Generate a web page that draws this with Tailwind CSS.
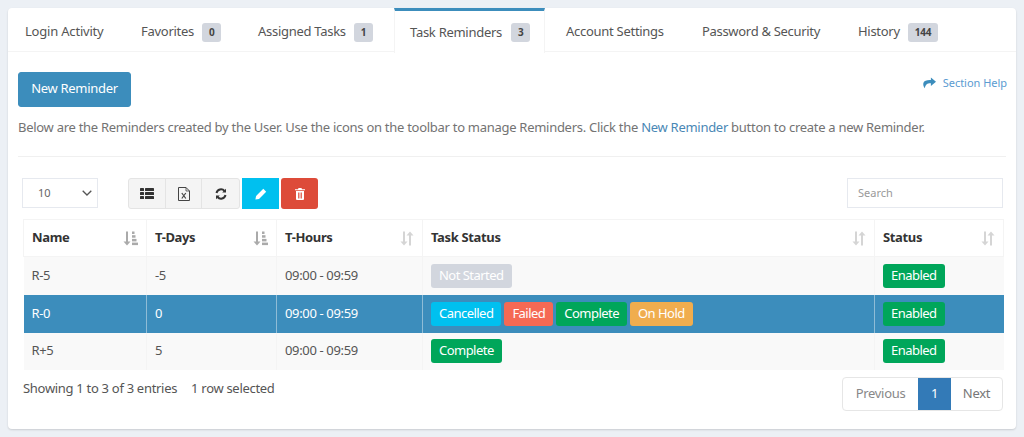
<!DOCTYPE html>
<html>
<head>
<meta charset="utf-8">
<script src="https://cdn.jsdelivr.net/npm/@tailwindcss/browser@4"></script>
</head>
<body class="bg-[#ecf0f5] font-['Noto_Sans',sans-serif] text-[13px] text-[#555] h-[437px] overflow-hidden">
<div class="pt-2 pl-2 w-[1016px]">
<div class="bg-white rounded-[4px] shadow-[0_1px_2px_rgba(0,0,0,0.15)] h-[421px]">
  <div class="flex h-[44px] border-b border-[#f4f4f4] tracking-[-0.28px]">
    <div class="w-[114px] pl-[17px] pt-[5px] flex items-center tracking-[-0.2px]">Login Activity</div>
    <div class="w-[117px] pl-[19px] pt-[5px] flex items-center gap-2">Favorites <span class="bg-[#d2d6de] text-[#444] rounded-[3px] text-[10px] font-bold h-[19px] px-[7px] flex items-center">0</span></div>
    <div class="w-[155px] pl-[19px] pt-[5px] flex items-center gap-2">Assigned Tasks <span class="bg-[#d2d6de] text-[#444] rounded-[3px] text-[10px] font-bold h-[19px] px-[7px] flex items-center">1</span></div>
    <div class="w-[151px] h-[45px] pl-[15px] pt-[1px] flex items-center gap-[9px] border-t-[3px] border-[#3c8dbc] border-x border-x-[#f4f4f4] bg-white">Task Reminders <span class="bg-[#d2d6de] text-[#444] rounded-[3px] text-[10px] font-bold h-[19px] px-[7px] flex items-center">3</span></div>
    <div class="w-[138px] pl-[21px] pt-[5px] flex items-center">Account Settings</div>
    <div class="w-[156px] pl-[19px] pt-[5px] flex items-center tracking-[-0.31px]">Password &amp; Security</div>
    <div class="w-[116px] pl-[19px] pt-[5px] flex items-center gap-2">History <span class="bg-[#d2d6de] text-[#444] rounded-[3px] text-[10px] font-bold h-[19px] px-[7px] flex items-center">144</span></div>
  </div>
  <div class="px-[10px] pt-[20px]">
    <div class="flex justify-between items-start h-[35px]">
      <button class="w-[113px] h-[35px] bg-[#3c8dbc] rounded-[3px] border border-[#3c8dbc] text-white tracking-[-0.3px] pb-[2px]">New Reminder</button>
      <a class="flex items-center gap-[7px] text-[11px] text-[#5b9bd1] mt-[3px] mr-[-1px] tracking-[-0.03px]">
        <svg class="w-[13px] h-[12px]" viewBox="0 0 14 12" fill="#3c8dbc"><path d="M8.5 0 14 4.6 8.5 9.2V6.400C5 6.200 2.800 7.400 2 11.600 0.500 9.800 0 8 0.400 6 1.200 3.200 4.600 2.600 8.500 2.800Z"/></svg>
        Section Help
      </a>
    </div>
    <p class="mt-[11px] leading-[18px] text-[#737373] tracking-[-0.28px] whitespace-nowrap">Below are the Reminders created by the User. Use the icons on the toolbar to manage Reminders. Click the <span class="text-[#4a87b5]">New Reminder</span> button to create a new Reminder.</p>
    <div class="mt-[20px] border-t border-[#f0f0f0]"></div>
    <div class="px-[4px] mt-[21px]">
      <div class="flex items-start h-[31px]">
        <div class="w-[76px] h-[30px] border border-[#e6e9ef] flex items-center justify-between pl-[15px] pr-[5px] text-[11px] text-[#666]">10
          <svg class="w-[10px] h-[6px]" viewBox="0 0 10 6" fill="none" stroke="#555" stroke-width="1.3"><path d="M.7.7 5 5 9.300.7"/></svg>
        </div>
        <div class="ml-[30px] w-[112px] h-[31px] bg-[#f4f4f4] border border-[#e4e4e4] rounded-[3px] flex">
          <div class="w-[37px] border-r border-[#e4e4e4] flex items-center justify-center">
            <svg class="w-[14px] h-[11px]" viewBox="0 0 14 11" fill="#333"><rect width="4" height="3" rx="0.6"/><rect x="5" width="9" height="3" rx="0.6"/><rect y="4" width="4" height="3" rx="0.6"/><rect x="5" y="4" width="9" height="3" rx="0.6"/><rect y="8" width="4" height="3" rx="0.6"/><rect x="5" y="8" width="9" height="3" rx="0.6"/></svg>
          </div>
          <div class="w-[36px] border-r border-[#e4e4e4] flex items-center justify-center">
            <svg class="w-[12px] h-[14px]" viewBox="0 0 12 14" fill="none" stroke="#444" stroke-width="1"><path d="M.5.5H8L11.500 4V13.500H.5Z"/><path d="M8 .5V4H11.500" stroke-width="0.800"/><path d="M3.800 6 7.800 11.500M7.800 6 3.800 11.500" stroke-width="1.200"/></svg>
          </div>
          <div class="flex-1 flex items-center justify-center">
            <svg class="w-[12px] h-[12px]" viewBox="0 0 12 12" fill="none" stroke="#333" stroke-width="2"><path d="M1.500 5A4.600 4.600 0 0 1 9.500 3"/><path d="M10.500 7A4.600 4.600 0 0 1 2.500 9"/><path d="M11 .7V4.500H7.200ZM1 11.300V7.500H4.800Z" fill="#333" stroke="none"/></svg>
          </div>
        </div>
        <div class="ml-[2px] w-[37px] h-[31px] bg-[#00c0ef] flex items-center justify-center">
          <svg class="w-[12px] h-[12px]" viewBox="0 0 12 12" fill="#fff"><path d="M8.300.8 11.200 3.700 4 10.900.4 11.600 1.100 8Z"/></svg>
        </div>
        <div class="ml-[2px] w-[37px] h-[31px] bg-[#dd4b39] rounded-[3px] flex items-center justify-center">
          <svg class="w-[10px] h-[12px]" viewBox="0 0 10 12" fill="#fff"><path d="M3.500 0h3l.5 1.200H10v1H0v-1h3ZM1 3h8v8a1 1 0 0 1-1 1H2a1 1 0 0 1-1-1ZM3 4.500v6h.8v-6ZM4.600 4.500v6h.8v-6ZM6.200 4.500v6H7v-6Z" fill-rule="evenodd"/></svg>
        </div>
        <div class="ml-auto mr-[-1px] w-[156px] h-[30px] border border-[#e6e9ef] flex items-center pl-[10px] text-[11px] text-[#999]">Search</div>
      </div>
    </div>
    <div class="pl-[5px] mt-[10px]">
      <table class="w-[980px] table-fixed border-collapse tracking-[-0.35px]">
        <colgroup><col class="w-[123px]"><col class="w-[130px]"><col class="w-[146px]"><col class="w-[452px]"><col class="w-[129px]"></colgroup>
        <thead>
          <tr class="h-[37px] bg-white font-bold text-[#333] text-left border-y border-[#f4f4f4]">
            <th class="pl-2 border-x border-[#f4f4f4]"><div class="flex justify-between items-center pr-2">Name
              <svg class="w-[15px] h-[15px]" viewBox="0 0 15 14" fill="#aaa"><path d="M3 0h2v10h2.500L4 14 .5 10H3Z"/><rect x="9" y="0" width="2.500" height="2.500"/><rect x="9" y="3.700" width="3.500" height="2.500"/><rect x="9" y="7.400" width="4.500" height="2.500"/><rect x="9" y="11.100" width="6" height="2.500"/></svg></div></th>
            <th class="pl-2 border-x border-[#f4f4f4]"><div class="flex justify-between items-center pr-2">T-Days
              <svg class="w-[15px] h-[15px]" viewBox="0 0 15 14" fill="#aaa"><path d="M3 0h2v10h2.500L4 14 .5 10H3Z"/><rect x="9" y="0" width="2.500" height="2.500"/><rect x="9" y="3.700" width="3.500" height="2.500"/><rect x="9" y="7.400" width="4.500" height="2.500"/><rect x="9" y="11.100" width="6" height="2.500"/></svg></div></th>
            <th class="pl-2 border-x border-[#f4f4f4]"><div class="flex justify-between items-center pr-2">T-Hours
              <svg class="w-[14px] h-[15px]" viewBox="0 0 14 14" fill="#d5d5d5"><path d="M3 0h2v10h2.500L4 14 .5 10H3Z"/><path d="M9 14h2V4h2.500L10 0 6.500 4H9Z"/></svg></div></th>
            <th class="pl-2 border-x border-[#f4f4f4]"><div class="flex justify-between items-center pr-2">Task Status
              <svg class="w-[14px] h-[15px]" viewBox="0 0 14 14" fill="#d5d5d5"><path d="M3 0h2v10h2.500L4 14 .5 10H3Z"/><path d="M9 14h2V4h2.500L10 0 6.500 4H9Z"/></svg></div></th>
            <th class="pl-2 border-x border-[#f4f4f4]"><div class="flex justify-between items-center pr-2">Status
              <svg class="w-[14px] h-[15px]" viewBox="0 0 14 14" fill="#d5d5d5"><path d="M3 0h2v10h2.500L4 14 .5 10H3Z"/><path d="M9 14h2V4h2.500L10 0 6.500 4H9Z"/></svg></div></th>
          </tr>
        </thead>
        <tbody class="[&_span]:tracking-[-0.53px]">
          <tr class="h-[38px] bg-[#f9f9f9] text-[#555]">
            <td class="pl-2">R-5</td><td class="pl-2 border-l border-[#f4f4f4]">-5</td><td class="pl-2 border-l border-[#f4f4f4]">09:00 - 09:59</td>
            <td class="pl-2 border-l border-[#f4f4f4]"><span class="inline-flex items-center h-[24px] px-2 rounded-[3px] bg-[#d2d6de] text-white">Not Started</span></td>
            <td class="pl-2 border-l border-[#f4f4f4]"><span class="inline-flex items-center h-[24px] px-2 rounded-[3px] bg-[#00a65a] text-white">Enabled</span></td>
          </tr>
          <tr class="h-[38px] bg-[#3c8dbc] text-white">
            <td class="pl-2">R-0</td><td class="pl-2 border-l border-[#8fbcd6]">0</td><td class="pl-2 border-l border-[#8fbcd6]">09:00 - 09:59</td>
            <td class="pl-2 border-l border-[#8fbcd6]"><div class="flex gap-[3px]"><span class="inline-flex items-center h-[24px] px-2 rounded-[3px] bg-[#00c0ef] text-white">Cancelled</span><span class="inline-flex items-center h-[24px] px-2 rounded-[3px] bg-[#f56954] text-white">Failed</span><span class="inline-flex items-center h-[24px] px-2 rounded-[3px] bg-[#00a65a] text-white">Complete</span><span class="inline-flex items-center h-[24px] px-2 rounded-[3px] bg-[#f0ad4e] text-white">On Hold</span></div></td>
            <td class="pl-2 border-l border-[#8fbcd6]"><span class="inline-flex items-center h-[24px] px-2 rounded-[3px] bg-[#00a65a] text-white">Enabled</span></td>
          </tr>
          <tr class="h-[37px] bg-[#f9f9f9] text-[#555]">
            <td class="pl-2">R+5</td><td class="pl-2 border-l border-[#f4f4f4]">5</td><td class="pl-2 border-l border-[#f4f4f4]">09:00 - 09:59</td>
            <td class="pl-2 border-l border-[#f4f4f4]"><span class="inline-flex items-center h-[24px] px-2 rounded-[3px] bg-[#00a65a] text-white">Complete</span></td>
            <td class="pl-2 border-l border-[#f4f4f4]"><span class="inline-flex items-center h-[24px] px-2 rounded-[3px] bg-[#00a65a] text-white">Enabled</span></td>
          </tr>
        </tbody>
      </table>
      <div class="flex justify-between mt-[7px] w-[980px] tracking-[-0.3px]">
        <div class="flex gap-[14px] mt-[2px] h-[18px] leading-[18px]"><span>Showing 1 to 3 of 3 entries</span><span>1 row selected</span></div>
        <div class="flex h-[34px] border border-[#e6e6e6] rounded-[4px] w-[161px] items-stretch">
          <div class="w-[75px] flex items-center justify-center text-[#888]">Previous</div>
          <div class="w-[33px] bg-[#337ab7] text-white flex items-center justify-center">1</div>
          <div class="flex-1 flex items-center justify-center text-[#777]">Next</div>
        </div>
      </div>
    </div>
  </div>
</div>
</div>
</body>
</html>
